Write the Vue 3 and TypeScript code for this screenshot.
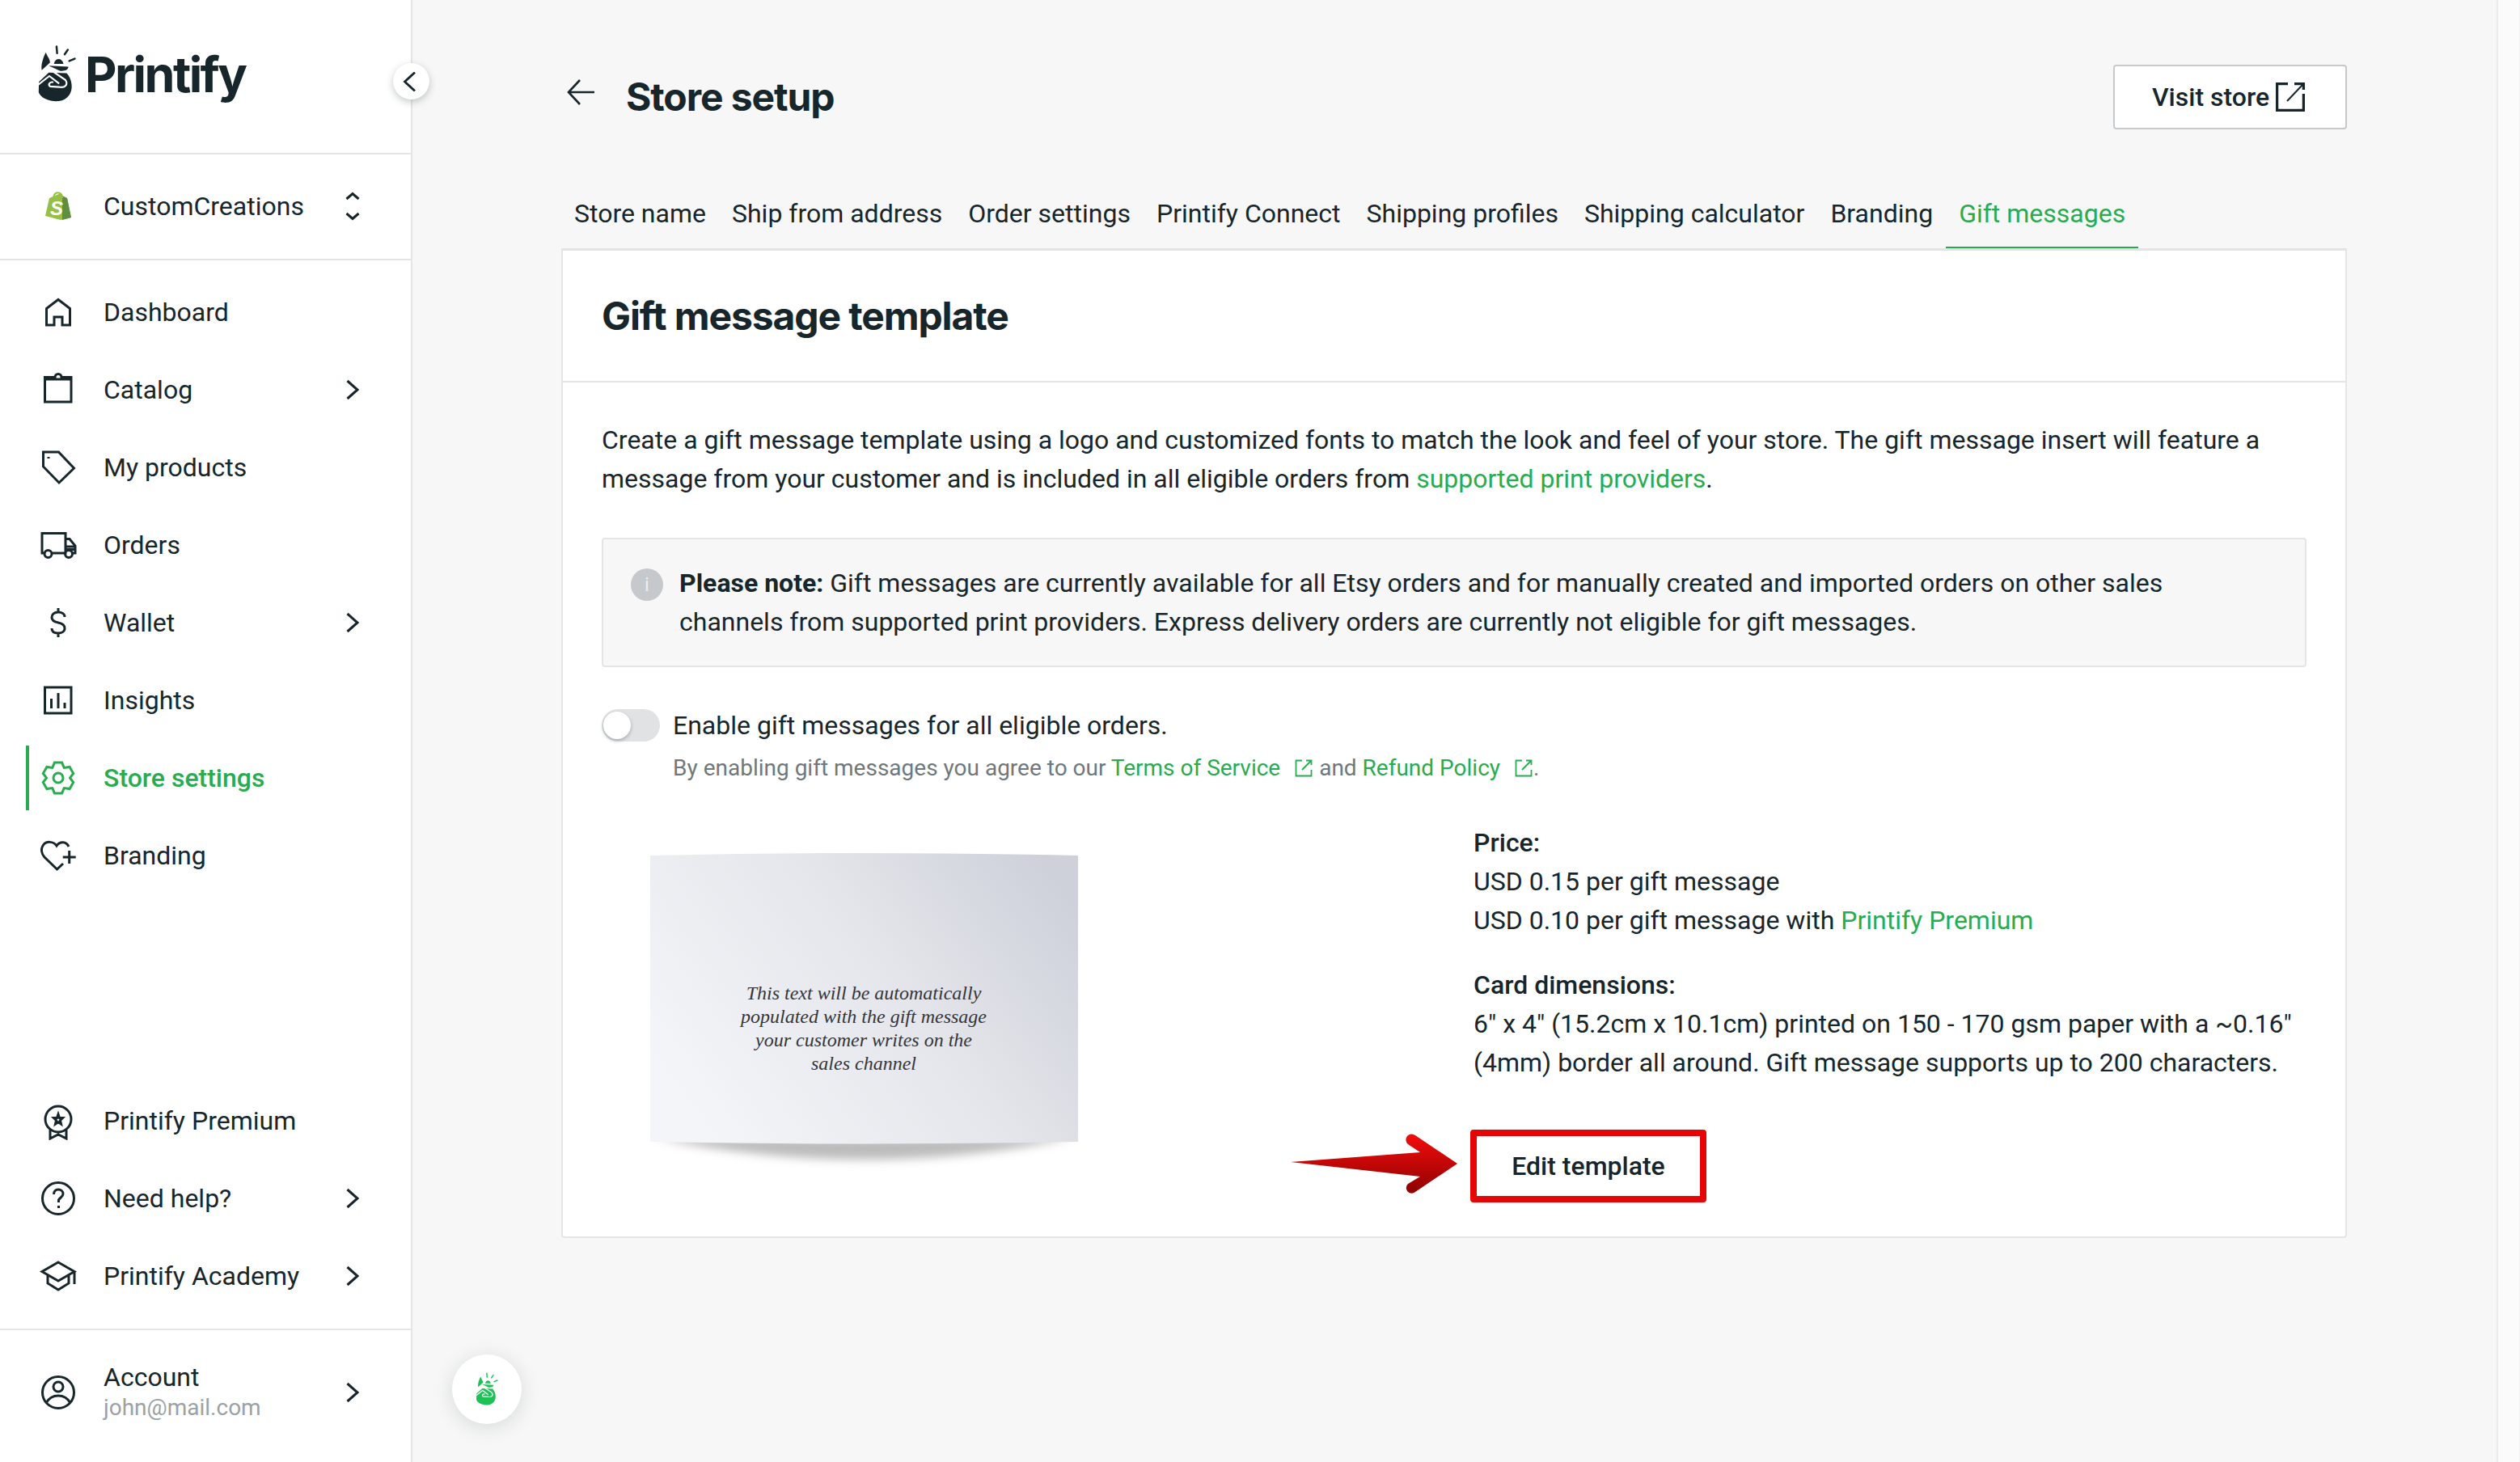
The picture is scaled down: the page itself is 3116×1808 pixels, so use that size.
<script setup lang="ts">
interface NavItem {
  label: string;
  icon: string;
  arrow?: boolean;
  active?: boolean;
}

function gearPath() {
  const pts: string[] = [];
  for (let i = 0; i < 6; i++) {
    const a = (i * Math.PI) / 3 - Math.PI / 2;
    const corners: [number, number][] = [
      [-0.52, 14.5],
      [-0.24, 19.5],
      [0.24, 19.5],
      [0.52, 14.5]
    ];
    corners.forEach(([d, r]) => {
      pts.push(`${(24 + r * Math.cos(a + d)).toFixed(1)} ${(24 + r * Math.sin(a + d)).toFixed(1)}`);
    });
  }
  return `M${pts.join(' L')} Z M30 24 A6 6 0 1 1 18 24 A6 6 0 1 1 30 24`;
}

const chevron = 'M17.5 13 L30 24 L17.5 35';

const mainNav: NavItem[] = [
  { label: 'Dashboard', icon: 'M9.5 40 V19.5 L24 8.5 L38.5 19.5 V40 H29 V30 H19 V40 Z' },
  {
    label: 'Catalog',
    icon: 'M7.5 8.5 H20 A4 4 0 0 1 28 8.5 H40 V39 H7.5 Z M8 11 H40',
    arrow: true
  },
  { label: 'My products', icon: 'M5.5 5 H24.5 L43.5 25 L25 43 L5.5 23 Z M12 11 V13' },
  {
    label: 'Orders',
    icon: 'M6 34 H4 V9.5 H33 V34 H17 M33 16.5 H38 L45 25 V34 H42 M34 26 H45 M34 29.5 H45 M16 35 A4.5 4.5 0 1 1 7 35 A4.5 4.5 0 1 1 16 35 M41.5 35 A4.5 4.5 0 1 1 32.5 35 A4.5 4.5 0 1 1 41.5 35'
  },
  {
    label: 'Wallet',
    icon: 'M24 6 V11 M24 37 V42 M32 17 C32 13 28 11 24 11 C19 11 16 14 16 17.5 C16 21 19 23 24 24 C29 25 32 27 32 31 C32 35 28 37 24 37 C19 37 16 35 16 31',
    arrow: true
  },
  {
    label: 'Insights',
    icon: 'M7.5 8 H40 V40 H7.5 Z M15.5 22 V34 M24 15 V34 M32 27 V34'
  },
  { label: 'Store settings', icon: gearPath(), active: true },
  {
    label: 'Branding',
    icon: 'M37 13 C34 6.5 26 6 22 12 C18 6 9 6 5.5 11 C2 16 3.5 22 7 26 L22.5 41 L30 34 M37.7 18 V34 M29.7 26 H45.7'
  }
];

const bottomNav: NavItem[] = [
  {
    label: 'Printify Premium',
    icon: 'M40 22 A16 16 0 1 1 8 22 A16 16 0 1 1 40 22 M14 35 V46 L24 41 L34 46 V35 M24 16 L25.5 20.5 H29.5 L26.5 23.5 L27.5 28 L24 25.5 L20.5 28 L21.5 23.5 L18.5 20.5 H22.5 Z'
  },
  {
    label: 'Need help?',
    icon: 'M43.5 24 A19.5 19.5 0 1 1 4.5 24 A19.5 19.5 0 1 1 43.5 24 M18.5 19 C18.5 15 21 13 24 13 C27.5 13 30 15.5 30 18.5 C30 22 26 23 24.5 26 V29 M24.5 33 V36',
    arrow: true
  },
  {
    label: 'Printify Academy',
    icon: 'M24 7 L44 18.5 L24 30 L4 18.5 Z M11 23 V33 L24 41 L37 33 V23 M44 18.5 V34',
    arrow: true
  }
];

const tabs = [
  'Store name',
  'Ship from address',
  'Order settings',
  'Printify Connect',
  'Shipping profiles',
  'Shipping calculator',
  'Branding',
  'Gift messages'
];

const cardLines = [
  'This text will be automatically',
  'populated with the gift message',
  'your customer writes on the',
  'sales channel'
];
</script>

<template>
  <div class="page">
    <svg class="defs" width="0" height="0">
      <symbol id="hand" viewBox="130 150 140 210">
        <g fill="currentColor">
          <path d="M160 180 C150 200 142 225 146 242 L174 216 C176 205 165 195 160 180 Z" />
          <path d="M188 220 C192 198 216 198 221 220 Z" />
          <path d="M170 226 L238 230 C238 242 222 246 208 244 Z" />
          <path d="M135 318 C142 340 178 352 205 349 C236 345 253 320 249 290 C247 274 241 262 232 252 L170 250 L136 282 Z" />
        </g>
        <g fill="none" stroke="currentColor" stroke-width="7" stroke-linecap="round">
          <path d="M197 160 L199 183 M236 171 L225 187 M260 202 L241 210" />
        </g>
        <g fill="none" stroke="#fff" stroke-width="6" stroke-linejoin="round">
          <path d="M134 262 L172 238 L228 276 C238 292 226 304 206 300 L174 298 C166 290 176 280 186 284" />
          <path d="M134 292 L172 262 L206 288" />
        </g>
      </symbol>
    </svg>

    <aside class="sidebar">
      <div class="logo">
        <svg class="logo-mark"><use href="#hand" /></svg>
        <span class="logo-text">Printify</span>
      </div>

      <div class="store-switch">
        <svg class="icon" viewBox="0 0 48 48">
          <path d="M8 36 L13 14 L27 8 L30 12 L35 14 L40 38 L27 41 Z" fill="#95bf47" stroke="none" />
          <path d="M29 11 L35 14 L40 38 L29 41 Z" fill="#5e8e3e" stroke="none" />
          <path d="M18 15 C18 8 23 6 26 8 C28 9 29 11 29 14" fill="none" stroke="#95bf47" stroke-width="2" />
          <text x="14" y="35" class="bag-s">S</text>
        </svg>
        <span class="nav-label">CustomCreations</span>
        <svg class="icon" viewBox="0 0 48 48">
          <path d="M16.5 15 L24 8.5 L31.5 15 M16.5 33 L24 39.5 L31.5 33" />
        </svg>
      </div>

      <nav class="nav nav-main">
        <a v-for="item in mainNav" :key="item.label" class="nav-item" :class="{ active: item.active }">
          <svg class="icon" viewBox="0 0 48 48"><path :d="item.icon" /></svg>
          <span class="nav-label">{{ item.label }}</span>
          <svg v-if="item.arrow" class="icon" viewBox="0 0 48 48"><path :d="chevron" /></svg>
        </a>
      </nav>

      <nav class="nav nav-bottom">
        <a v-for="item in bottomNav" :key="item.label" class="nav-item">
          <svg class="icon" viewBox="0 0 48 48"><path :d="item.icon" /></svg>
          <span class="nav-label">{{ item.label }}</span>
          <svg v-if="item.arrow" class="icon" viewBox="0 0 48 48"><path :d="chevron" /></svg>
        </a>
      </nav>

      <div class="account">
        <svg class="icon" viewBox="0 0 48 48">
          <path d="M43.5 24 A19.5 19.5 0 1 1 4.5 24 A19.5 19.5 0 1 1 43.5 24 M30 17 A6 6 0 1 1 18 17 A6 6 0 1 1 30 17 M9 37 C13 30 19 28 24 28 C29 28 35 30 39 37" />
        </svg>
        <div class="nav-label">
          <div class="account-name">Account</div>
          <div class="account-mail">john@mail.com</div>
        </div>
        <svg class="icon" viewBox="0 0 48 48"><path :d="chevron" /></svg>
      </div>
    </aside>

    <button class="collapse" type="button">
      <svg viewBox="0 0 24 24" width="24" height="24"><path d="M16 0.5 L3.5 12 L16 23.5" /></svg>
    </button>
    <button class="float-logo" type="button">
      <svg class="float-mark"><use href="#hand" /></svg>
    </button>

    <main class="content">
      <header class="page-head">
        <svg class="back" viewBox="0 0 36 36"><path d="M35 18 H4 M17 3 L3 18 L17 33" /></svg>
        <h1 class="page-title">Store setup</h1>
        <button class="visit" type="button">
          <span>Visit store</span>
          <svg viewBox="0 0 36 36" width="36" height="36">
            <path d="M15 1.5 H1.5 V34.5 H34.5 V14 M23 1.5 H34.5 V9" />
            <path class="thin" d="M33 3 L14 23" />
          </svg>
        </button>
      </header>

      <div class="tabs">
        <a v-for="tab in tabs" :key="tab" class="tab" :class="{ current: tab === 'Gift messages' }">{{ tab }}</a>
      </div>

      <section class="card">
        <h2 class="card-title">Gift message template</h2>
        <div class="card-body">
          <p class="intro">
            Create a gift message template using a logo and customized fonts to match the look and feel of your store. The gift message insert will feature a message from your customer and is included in all eligible orders from <a class="link">supported print providers</a>.
          </p>

          <div class="note">
            <span class="note-icon">i</span>
            <p><strong>Please note:</strong> Gift messages are currently available for all Etsy orders and for manually created and imported orders on other sales channels from supported print providers. Express delivery orders are currently not eligible for gift messages.</p>
          </div>

          <label class="toggle-row">
            <span class="toggle"><span class="knob"></span></span>
            <span>Enable gift messages for all eligible orders.</span>
          </label>
          <p class="terms">
            By enabling gift messages you agree to our <a class="link">Terms of Service</a>
            <svg class="ext" viewBox="0 0 24 24"><path d="M10 2.5 H2.5 V21.5 H21.5 V14 M15 2.5 H21.5 V8 M21 3 L10 14" /></svg>
            and <a class="link">Refund Policy</a>
            <svg class="ext" viewBox="0 0 24 24"><path d="M10 2.5 H2.5 V21.5 H21.5 V14 M15 2.5 H21.5 V8 M21 3 L10 14" /></svg>.
          </p>

          <div class="details">
            <svg class="preview" viewBox="0 0 560 420" width="560" height="420">
              <defs>
                <linearGradient id="paper" x1="0" y1="0.7" x2="1" y2="0.2">
                  <stop offset="0" stop-color="#f4f5f9" />
                  <stop offset="0.55" stop-color="#e5e6eb" />
                  <stop offset="1" stop-color="#ced1da" />
                </linearGradient>
                <filter id="soft" x="-10%" y="-100%" width="120%" height="300%">
                  <feGaussianBlur stdDeviation="6" />
                </filter>
              </defs>
              <path d="M20 366 Q278 420 537 366 Z" fill="#bcbcbc" filter="url(#soft)" />
              <path d="M14 17 Q278 11 543 17 V371 Q278 376 14 371 Z" fill="url(#paper)" />
              <text
                v-for="(line, i) in cardLines"
                :key="line"
                x="278"
                :y="195 + i * 29"
                text-anchor="middle"
                class="script"
              >{{ line }}</text>
            </svg>

            <div class="info">
              <p><strong>Price:</strong><br />USD 0.15 per gift message<br />USD 0.10 per gift message with <a class="link">Printify Premium</a></p>
              <p class="dims"><strong>Card dimensions:</strong><br />6" x 4" (15.2cm x 10.1cm) printed on 150 - 170 gsm paper with a ~0.16" (4mm) border all around. Gift message supports up to 200 characters.</p>
              <div class="edit-wrap">
                <svg class="pointer" viewBox="0 0 208 76" width="208" height="76">
                  <defs>
                    <linearGradient id="red" x1="0" y1="0" x2="0" y2="1">
                      <stop offset="0" stop-color="#f40d0d" />
                      <stop offset="1" stop-color="#8f0000" />
                    </linearGradient>
                  </defs>
                  <path
                    d="M0 36 L160 24 L145 14 A6.5 6.5 0 0 1 154 3 L206 38 L154 73 A6.5 6.5 0 0 1 145 63 L160 54 Z"
                    fill="url(#red)"
                  />
                </svg>
                <button class="edit" type="button">Edit template</button>
              </div>
            </div>
          </div>
        </div>
      </section>
    </main>

    <div class="scroll-strip"></div>
  </div>
</template>

<style scoped>
.page {
  position: relative;
  display: flex;
  width: 3116px;
  height: 1808px;
  overflow: hidden;
  background: #f7f7f7;
  color: #17262b;
  font: 400 32px/48px Roboto, "Liberation Sans", sans-serif;
}

.defs {
  position: absolute;
}

.sidebar {
  display: flex;
  flex-direction: column;
  flex: none;
  box-sizing: border-box;
  width: 510px;
  height: 100%;
  background: #fff;
  border-right: 2px solid #e4e5e6;
}

.logo {
  display: flex;
  align-items: center;
  flex: none;
  box-sizing: border-box;
  height: 191px;
  padding-left: 46px;
  border-bottom: 2px solid #e4e5e6;
}

.logo-mark {
  flex: none;
  width: 50px;
  height: 75px;
  margin: -7px 9px 0 0;
  color: #17262b;
}

.logo-text {
  font: 700 61px/72px Inter, sans-serif;
  letter-spacing: -2.6px;
  margin-top: -6px;
}

.icon {
  flex: none;
  width: 48px;
  height: 48px;
  fill: none;
  stroke: currentColor;
  stroke-width: 3;
}

.bag-s {
  fill: #fff;
  stroke: none;
  font: italic 700 24px "Liberation Sans", sans-serif;
}

.store-switch {
  display: flex;
  align-items: center;
  flex: none;
  box-sizing: border-box;
  height: 131px;
  padding: 0 48px 2px;
  border-bottom: 2px solid #e4e5e6;
}

.nav {
  display: flex;
  flex-direction: column;
  gap: 16px;
}

.nav-main {
  padding-top: 24px;
}

.nav-bottom {
  margin-top: auto;
  padding-bottom: 25px;
}

.nav-item {
  position: relative;
  display: flex;
  align-items: center;
  height: 80px;
  padding: 0 48px;
}

.nav-item.active {
  color: #29ab51;
  font-weight: 500;
}

.nav-item.active::before {
  content: "";
  position: absolute;
  left: 32px;
  top: 0;
  width: 4px;
  height: 80px;
  background: #29ab51;
}

.nav-label {
  flex: 1;
  margin-left: 32px;
}

.account {
  display: flex;
  align-items: center;
  flex: none;
  box-sizing: border-box;
  height: 165px;
  padding: 0 48px 10px;
  border-top: 2px solid #e4e5e6;
}

.account-name {
  line-height: 38px;
}

.account-mail {
  color: #9aa2a5;
  font-size: 28px;
  line-height: 38px;
}

.collapse {
  position: absolute;
  left: 486px;
  top: 78px;
  display: flex;
  align-items: center;
  justify-content: center;
  width: 45px;
  height: 45px;
  padding: 0;
  background: #fff;
  border: 0;
  border-radius: 50%;
  box-shadow: 0 3px 10px rgba(23, 38, 43, 0.25);
}

.collapse svg {
  fill: none;
  stroke: #17262b;
  stroke-width: 2.8;
}

.float-logo {
  position: absolute;
  left: 559px;
  top: 1675px;
  display: flex;
  align-items: center;
  justify-content: center;
  width: 86px;
  height: 86px;
  padding: 0;
  background: #fff;
  border: 0;
  border-radius: 50%;
  box-shadow: 0 4px 24px rgba(23, 38, 43, 0.14);
}

.float-mark {
  width: 29px;
  height: 44px;
  color: #1dc155;
}

.content {
  flex: 1;
  min-width: 0;
  padding: 80px 185px 0 184px;
}

.page-head {
  display: flex;
  align-items: center;
  height: 80px;
}

.back {
  flex: none;
  width: 36px;
  height: 36px;
  margin: -12px 0 0 6px;
  fill: none;
  stroke: #17262b;
  stroke-width: 2.6;
}

.page-title {
  flex: 1;
  margin: 0 0 0 38px;
  font: 700 48px/60px Inter, sans-serif;
  letter-spacing: -1.1px;
}

.visit {
  display: flex;
  align-items: center;
  justify-content: center;
  gap: 8px;
  box-sizing: border-box;
  width: 289px;
  height: 80px;
  padding: 0 4px 0 0;
  background: #fff;
  border: 2px solid #c5c9cb;
  border-radius: 4px;
  color: inherit;
  font: 500 32px/48px Roboto, sans-serif;
}

.visit svg {
  fill: none;
  stroke: #17262b;
  stroke-width: 3.5;
}

.visit svg .thin {
  stroke-width: 2;
}

.tabs {
  display: flex;
  margin-top: 60px;
  border-bottom: 3px solid #e2e4e6;
}

.tab {
  padding: 20px 16px 17px;
  border-bottom: 2px solid transparent;
}

.tab.current {
  color: #29ab51;
  border-bottom-color: #29ab51;
}

.card {
  box-sizing: border-box;
  height: 1221px;
  background: #fff;
  border: 2px solid #e4e5e6;
  border-top: 0;
  border-radius: 0 0 4px 4px;
}

.card-title {
  box-sizing: border-box;
  height: 163px;
  margin: 0;
  padding: 0 48px;
  border-bottom: 2px solid #e4e5e6;
  font: 700 48px/161px Inter, sans-serif;
  letter-spacing: -1.1px;
}

.card-body {
  padding: 47px 48px 0;
}

.intro {
  margin: 0;
}

.link {
  color: #29ab51;
}

.note {
  display: flex;
  box-sizing: border-box;
  height: 160px;
  margin-top: 49px;
  padding: 30px 34px 0 34px;
  background: #f7f7f7;
  border: 2px solid #e4e5e6;
  border-radius: 4px;
}

.note p {
  margin: 0;
  max-width: 1900px;
}

.note strong,
.info strong {
  font-weight: 500;
}

.note strong {
  font-weight: 700;
}

.note-icon {
  flex: none;
  width: 40px;
  height: 40px;
  margin: 6px 20px 0 0;
  border-radius: 50%;
  background: #c5c9cb;
  color: #eceeee;
  font-size: 24px;
  line-height: 40px;
  text-align: center;
}

.toggle-row {
  display: flex;
  align-items: center;
  gap: 16px;
  margin-top: 48px;
}

.toggle {
  display: block;
  flex: none;
  width: 72px;
  height: 40px;
  box-sizing: border-box;
  padding: 3px 2px;
  background: #e0e2e4;
  border-radius: 20px;
}

.knob {
  display: block;
  width: 34px;
  height: 34px;
  background: #fff;
  border-radius: 50%;
  box-shadow: 0 2px 4px rgba(23, 38, 43, 0.3);
}

.terms {
  margin: 9px 0 0 88px;
  color: #6f787c;
  font-size: 28px;
  line-height: 40px;
}

.ext {
  width: 24px;
  height: 24px;
  margin: 0 0 -3px 17px;
  fill: none;
  stroke: #29ab51;
  stroke-width: 1.8;
}

.details {
  display: flex;
  align-items: flex-start;
  margin-top: 48px;
}

.preview {
  flex: none;
  margin: 23px 0 0 46px;
}

.info {
  margin-left: 472px;
  width: 1040px;
}

.info p {
  margin: 0;
}

.info .dims {
  margin-top: 32px;
}

.edit-wrap {
  position: relative;
  margin: 59px 0 0 -4px;
}

.pointer {
  position: absolute;
  left: -222px;
  top: 4px;
}

.edit {
  box-sizing: border-box;
  width: 292px;
  height: 90px;
  padding: 0;
  background: #fff;
  border: 8px solid #e60505;
  border-radius: 4px;
  color: inherit;
  font: 500 32px/48px Roboto, sans-serif;
}

.script {
  font: italic 400 24px "Liberation Serif", serif;
  fill: #33353a;
}

.scroll-strip {
  flex: none;
  box-sizing: border-box;
  width: 29px;
  height: 100%;
  border-left: 2px solid #ececec;
  border-right: 1px solid #efefef;
  background: #fbfbfb;
}
</style>

<style>
html,
body {
  margin: 0;
}
</style>
